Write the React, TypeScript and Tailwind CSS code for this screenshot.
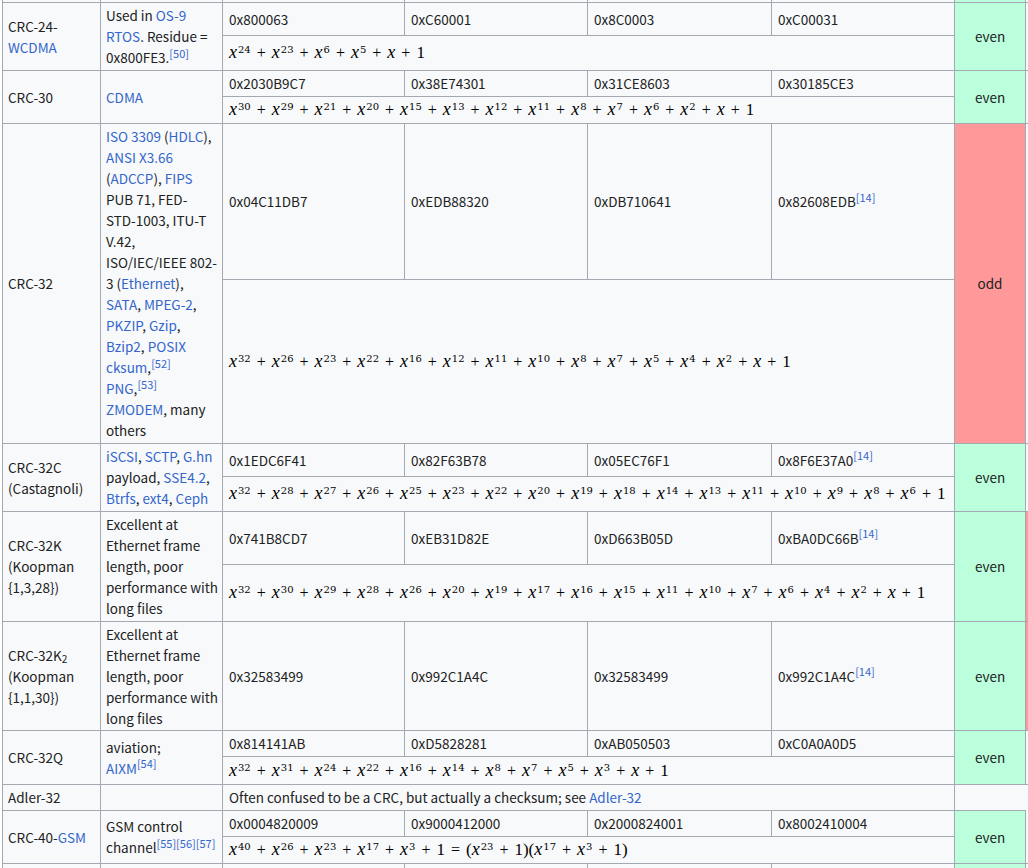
import type { ReactNode } from 'react';

const A = ({ children }: { children: ReactNode }) => (
  <span className="text-[#3366cc]">{children}</span>
);

const Ref = ({ children }: { children: ReactNode }) => (
  <sup className="text-[11px] text-[#3366cc]">{children}</sup>
);

type Term = number | 'x' | '1';

function X({ e }: { e?: number }) {
  return (
    <>
      <i className="text-[18px]">x</i>
      {e !== undefined && (
        <sup className="ml-px font-['DejaVu_Serif',serif] text-[10px]">{e}</sup>
      )}
    </>
  );
}

const Plus = () => <span className="mx-[6px] text-[16px]">+</span>;

function Poly({ terms, tail }: { terms: Term[]; tail?: ReactNode }) {
  return (
    <span className="whitespace-nowrap font-['Liberation_Serif',serif] text-black">
      {terms.map((t, i) => (
        <span key={i}>
          {i > 0 && <Plus />}
          {t === '1' ? <span className="text-[17px]">1</span> : t === 'x' ? <X /> : <X e={t} />}
        </span>
      ))}
      {tail}
    </span>
  );
}

type Entry = {
  name: ReactNode;
  use: ReactNode;
  hex: ReactNode[];
  poly?: ReactNode;
  parity: 'even' | 'odd';
  strip: string;
};

const entries: Entry[] = [
  {
    name: (<>CRC-24-<br /><A>WCDMA</A></>),
    use: (<>Used in <A>OS-9</A><br /><A>RTOS</A>. Residue =<br />0x800FE3.<Ref>[50]</Ref></>),
    hex: ['0x800063', '0xC60001', '0x8C0003', '0xC00031'],
    poly: <Poly terms={[24, 23, 6, 5, 'x', '1']} />,
    parity: 'even',
    strip: 'bg-[#f8f9fa]',
  },
  {
    name: 'CRC-30',
    use: <A>CDMA</A>,
    hex: ['0x2030B9C7', '0x38E74301', '0x31CE8603', '0x30185CE3'],
    poly: <Poly terms={[30, 29, 21, 20, 15, 13, 12, 11, 8, 7, 6, 2, 'x', '1']} />,
    parity: 'even',
    strip: 'bg-[#f8f9fa]',
  },
  {
    name: 'CRC-32',
    use: (
      <>
        <A>ISO 3309</A> (<A>HDLC</A>),<br />
        <A>ANSI X3.66</A><br />
        (<A>ADCCP</A>), <A>FIPS</A><br />
        PUB 71, FED-<br />
        STD-1003, ITU-T<br />
        V.42,<br />
        ISO/IEC/IEEE 802-<br />
        3 (<A>Ethernet</A>),<br />
        <A>SATA</A>, <A>MPEG-2</A>,<br />
        <A>PKZIP</A>, <A>Gzip</A>,<br />
        <A>Bzip2</A>, <A>POSIX</A><br />
        <A>cksum</A>,<Ref>[52]</Ref><br />
        <A>PNG</A>,<Ref>[53]</Ref><br />
        <A>ZMODEM</A>, many<br />
        others
      </>
    ),
    hex: ['0x04C11DB7', '0xEDB88320', '0xDB710641', <>0x82608EDB<Ref>[14]</Ref></>],
    poly: <Poly terms={[32, 26, 23, 22, 16, 12, 11, 10, 8, 7, 5, 4, 2, 'x', '1']} />,
    parity: 'odd',
    strip: 'bg-[#f8f9fa]',
  },
  {
    name: (<>CRC-32C<br />(Castagnoli)</>),
    use: (
      <>
        <A>iSCSI</A>, <A>SCTP</A>, <A>G.hn</A><br />
        payload, <A>SSE4.2</A>,<br />
        <A>Btrfs</A>, <A>ext4</A>, <A>Ceph</A>
      </>
    ),
    hex: ['0x1EDC6F41', '0x82F63B78', '0x05EC76F1', <>0x8F6E37A0<Ref>[14]</Ref></>],
    poly: <Poly terms={[32, 28, 27, 26, 25, 23, 22, 20, 19, 18, 14, 13, 11, 10, 9, 8, 6, '1']} />,
    parity: 'even',
    strip: 'bg-[#f8f9fa]',
  },
  {
    name: (<>CRC-32K<br />(Koopman<br />{'{1,3,28})'}</>),
    use: (<>Excellent at<br />Ethernet frame<br />length, poor<br />performance with<br />long files</>),
    hex: ['0x741B8CD7', '0xEB31D82E', '0xD663B05D', <>0xBA0DC66B<Ref>[14]</Ref></>],
    poly: <Poly terms={[32, 30, 29, 28, 26, 20, 19, 17, 16, 15, 11, 10, 7, 6, 4, 2, 'x', '1']} />,
    parity: 'even',
    strip: 'bg-[#ff9999]',
  },
  {
    name: (<>CRC-32K<sub>2</sub><br />(Koopman<br />{'{1,1,30})'}</>),
    use: (<>Excellent at<br />Ethernet frame<br />length, poor<br />performance with<br />long files</>),
    hex: ['0x32583499', '0x992C1A4C', '0x32583499', <>0x992C1A4C<Ref>[14]</Ref></>],
    parity: 'even',
    strip: 'bg-[#ff9999]',
  },
  {
    name: 'CRC-32Q',
    use: (<>aviation;<br /><A>AIXM</A><Ref>[54]</Ref></>),
    hex: ['0x814141AB', '0xD5828281', '0xAB050503', '0xC0A0A0D5'],
    poly: <Poly terms={[32, 31, 24, 22, 16, 14, 8, 7, 5, 3, 'x', '1']} />,
    parity: 'even',
    strip: 'bg-[#f8f9fa]',
  },
];

const gsm: Entry = {
  name: (<>CRC-40-<A>GSM</A></>),
  use: (<>GSM control<br />channel<Ref>[55][56][57]</Ref></>),
  hex: ['0x0004820009', '0x9000412000', '0x2000824001', '0x8002410004'],
  poly: (
    <Poly
      terms={[40, 26, 23, 17, 3, '1']}
      tail={
        <>
          <span className="mx-[6px] text-[16px]">=</span>
          <span className="text-[17px]">(</span>
          <X e={23} />
          <Plus />
          <span className="text-[17px]">1</span>
          <span className="text-[17px]">)(</span>
          <X e={17} />
          <Plus />
          <X e={3} />
          <Plus />
          <span className="text-[17px]">1</span>
          <span className="text-[17px]">)</span>
        </>
      }
    />
  ),
  parity: 'even',
  strip: 'bg-[#f8f9fa]',
};

// borders and padding shared by every cell; background set per cell
const base = 'flex items-center border-r border-b border-[#a2a9b1] pl-[6px] pr-[5px]';
const cell = `${base} bg-[#f8f9fa]`;

function Rows({ e }: { e: Entry }) {
  return (
    <>
      <div className={`${cell} row-span-2 !pl-[5px] whitespace-nowrap`}>
        <div>{e.name}</div>
      </div>
      <div className={`${cell} row-span-2 !pl-[5px] whitespace-nowrap`}>
        <div>{e.use}</div>
      </div>
      {e.hex.map((h, i) => (
        <div key={i} className={`${cell} whitespace-nowrap ${e.poly ? '' : 'row-span-2'}`}>
          <span>{h}</span>
        </div>
      ))}
      <div
        className={`flex items-center justify-center border-r border-b border-[#a2a9b1] row-span-2 ${
          e.parity === 'odd' ? 'bg-[#ff9999]' : 'bg-[#bbffdd]'
        }`}
      >
        {e.parity}
      </div>
      <div className={`row-span-2 border-b border-[#a2a9b1] ${e.strip}`} />
      {e.poly && <div className={`${cell} col-span-4`}>{e.poly}</div>}
    </>
  );
}

function Blank() {
  return (
    <>
      <div className={cell} />
      <div className={cell} />
      <div className={cell} />
      <div className={cell} />
      <div className={cell} />
      <div className={cell} />
      <div className="border-r border-b border-[#a2a9b1] bg-[#bbffdd]" />
      <div className="border-b border-[#a2a9b1] bg-[#f8f9fa]" />
    </>
  );
}

export default function App() {
  return (
    <div className="h-[868px] w-[1028px] overflow-hidden bg-white font-['Noto_Sans_CJK_SC',sans-serif] text-[13.5px] leading-[21px] text-[#202122]">
      <div className="ml-[2px] grid w-max grid-cols-[98px_122px_182px_183px_184px_183px_71px_80px] grid-rows-[3px_33px_35px_26px_27px_156px_164px_33px_35px_53px_57px_54px_55px_26px_28px_26px_26px_27px_40px] border-l border-[#a2a9b1]">
        {/* tail of the previous entry */}
        <Blank />

        {entries.map((e, i) => (
          <Rows key={i} e={e} />
        ))}

        {/* Adler-32 */}
        <div className={`${cell} !pl-[5px]`}>Adler-32</div>
        <div className={cell} />
        <div className={`${cell} col-span-4 whitespace-nowrap`}>
          <span>
            Often confused to be a CRC, but actually a checksum; see <A>Adler-32</A>
          </span>
        </div>
        <div className="border-b border-[#a2a9b1] bg-[#f8f9fa]" />
        <div className="bg-[#f8f9fa]" />

        <Rows e={gsm} />

        {/* start of the next entry */}
        <Blank />
      </div>
    </div>
  );
}
